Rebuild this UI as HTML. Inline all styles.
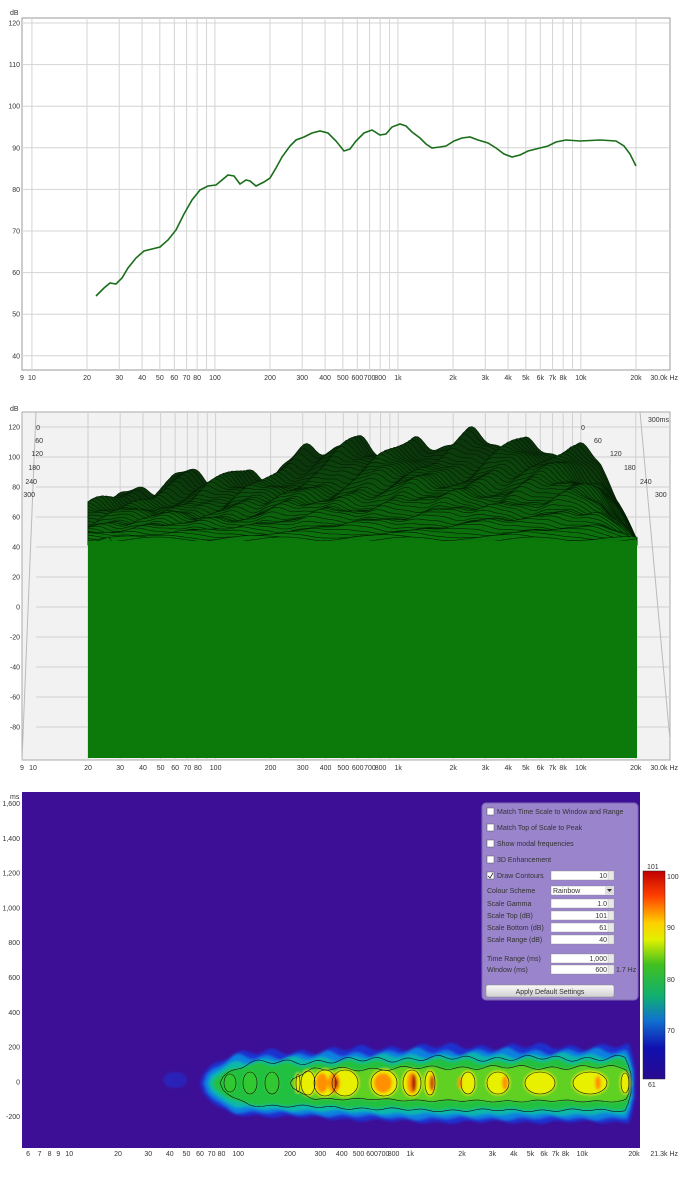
<!DOCTYPE html>
<html><head><meta charset="utf-8"><style>
body{margin:0;width:680px;height:1183px;background:#fff;overflow:hidden;font-family:"Liberation Sans",sans-serif}
svg{position:absolute;left:0;top:0}
text{font-family:"Liberation Sans",sans-serif;font-size:7px;fill:#333}
</style></head><body>
<svg id="s" width="680" height="1183" xmlns="http://www.w3.org/2000/svg">
<defs>
<filter id="bl"><feGaussianBlur stdDeviation="1.3"/></filter>
<linearGradient id="cb" x1="0" y1="0" x2="0" y2="1">
<stop offset="0" stop-color="#c00000"/><stop offset="0.12" stop-color="#ff4000"/><stop offset="0.25" stop-color="#ffd000"/><stop offset="0.33" stop-color="#e0f000"/><stop offset="0.45" stop-color="#40c020"/><stop offset="0.6" stop-color="#10b070"/><stop offset="0.72" stop-color="#1070d0"/><stop offset="0.85" stop-color="#1010b0"/><stop offset="1" stop-color="#2a0a90"/>
</linearGradient>
<linearGradient id="btn" x1="0" y1="0" x2="0" y2="1"><stop offset="0" stop-color="#fafafa"/><stop offset="1" stop-color="#d0d0d0"/></linearGradient>
</defs>
<rect x="22" y="18" width="648" height="352" fill="#fff" stroke="#999"/>
<g id="g1" stroke="#d4d4d4" stroke-width="1"></g>
<text x="10" y="15" font-size="6">dB</text>
<g id="l1"></g>
<polyline fill="none" stroke="#1a6e1a" stroke-width="1.6" points="96,296 104,288 110,283 116,284 122,278 128,268 136,258 144,251 152,249 160,247 168,240 176,230 184,214 192,200 200,190 208,186 216,185 222,180 228,175 234,176 240,184 246,180 250,181 256,186 264,182 270,178 276,168 282,157 290,146 296,140 304,137 312,133 320,131 328,133 336,141 344,151 350,149 356,141 364,133 372,130 380,135 386,134 392,127 400,124 406,126 412,132 420,138 426,144 432,148 440,147 446,146 454,141 462,138 470,137 478,140 488,143 496,148 504,154 512,157 520,155 528,151 536,149 548,146 556,142 566,140 580,141 600,140 616,141 624,146 630,154 636,166"/>
<rect x="22" y="412" width="648" height="348" fill="#f2f2f2" stroke="#aaa"/>
<g id="g2" stroke="#d0d0d0"></g>
<text x="10" y="411" font-size="6">dB</text>
<g id="wf"></g>
<g id="l2"></g>
<rect x="22" y="792" width="618" height="356" fill="#3d0f96"/>
<text x="10" y="799" font-size="6">ms</text>
<g id="l3"></g>
<g filter="url(#bl)" id="sp"></g>
<g id="ct" fill="none" stroke="#111" stroke-width="0.6"></g>
<rect x="482" y="803" width="156" height="197" rx="4" fill="#9a84cc" stroke="#7a68b0"/>
<g id="pn" font-size="6.5"></g>
<rect x="643" y="871" width="22" height="208" fill="url(#cb)" stroke="#222" stroke-width="0.5"/>
<text x="647" y="869" font-size="7">101</text><text x="648" y="1087" font-size="7">61</text>
<text x="667" y="879">100</text><text x="667" y="930">90</text><text x="667" y="982">80</text><text x="667" y="1033">70</text>
</svg>
<script>
const NS="http://www.w3.org/2000/svg";
function el(p,t,a,tx){const e=document.createElementNS(NS,t);for(const k in a)e.setAttribute(k,a[k]);if(tx!==undefined)e.textContent=tx;document.getElementById(p).appendChild(e);return e;}
const fr=[10,20,30,40,50,60,70,80,90,100,200,300,400,500,600,700,800,900,1000,2000,3000,4000,5000,6000,7000,8000,9000,10000,20000];
const lab={10:"10",20:"20",30:"30",40:"40",50:"50",60:"60",70:"70",80:"80",100:"100",200:"200",300:"300",400:"400",500:"500",600:"600",700:"700",800:"800",1000:"1k",2000:"2k",3000:"3k",4000:"4k",5000:"5k",6000:"6k",7000:"7k",8000:"8k",10000:"10k",20000:"20k"};
function X1(f){return 87+183*Math.log10(f/20);}
for(const f of fr){const x=X1(f);el("g1","line",{x1:x,y1:18,x2:x,y2:370});}
for(let d=40;d<=120;d+=10){const y=23+(120-d)*4.16;el("g1","line",{x1:22,y1:y,x2:670,y2:y});el("l1","text",{x:20,y:y+2.5,"text-anchor":"end"},d);}
function xlabels(g,Xf,y,last){el(g,"text",{x:22,y:y,"text-anchor":"middle"},"9");
for(const f in lab){if(f<10)continue;el(g,"text",{x:Xf(+f),y:y,"text-anchor":"middle"},lab[f]);}
el(g,"text",{x:678,y:y,"text-anchor":"end"},last);}
xlabels("l1",X1,380,"30.0k Hz");
function X2(f){return 88+182.6*Math.log10(f/20);}
for(const f of fr){if(f<20)continue;const x=X2(f);el("g2","line",{x1:x,y1:412,x2:x,y2:760});}
for(let d=-80;d<=120;d+=20){const y=607-d*1.5;el("g2","line",{x1:36,y1:y,x2:670,y2:y});el("l2","text",{x:20,y:y+2.5,"text-anchor":"end"},d);}
el("g2","line",{x1:36,y1:412,x2:22,y2:760,stroke:"#bbb"});
el("g2","line",{x1:640,y1:412,x2:670,y2:740,stroke:"#bbb"});
[["0",40,430],["60",43,443],["120",43,456],["180",40,470],["240",37,484],["300",35,497]].forEach(a=>el("l2","text",{x:a[1],y:a[2],"text-anchor":"end"},a[0]));
[["0",581,430],["60",594,443],["120",610,456],["180",624,470],["240",640,484],["300",655,497]].forEach(a=>el("l2","text",{x:a[1],y:a[2]},a[0]));
el("l2","text",{x:648,y:422},"300ms");
xlabels("l2",X2,770,"30.0k Hz");
const env=[[88,40],[150,52],[250,68],[320,88],[400,98],[500,96],[570,96],[600,75],[637,0]];
function H(x){for(let i=0;i<env.length-1;i++){const a=env[i],b=env[i+1];if(x<=b[0]){return a[1]+(b[1]-a[1])*(x-a[0])/(b[0]-a[0]);}}return 0;}
const N=40;
for(let k=0;k<=N;k++){const d=(N-k)/N;const pts=[];
for(let x=88;x<=637;x+=3){const r=8*Math.sin(x*0.11+k*0.35)+6*Math.sin(x*0.043-k*0.2)+3*Math.sin(x*0.23+k);
let h=H(x)+r*(x<590?1:Math.max(0,(637-x)/47));
let y=540-d*h-(1-d)*3*Math.sin(x*0.05+k);
if(k==N)y=540-3*Math.sin(x*0.05)-(x<110?(x-88)/4:0);
pts.push(x+","+y.toFixed(1));}
const g=Math.round(50+70*(1-d));
el("wf","path",{d:"M88,545 L"+pts.join(" L")+" L637,545 Z",fill:"rgb(12,"+g+",12)",stroke:"#041c04","stroke-width":"0.6"});}
el("wf","rect",{x:88,y:541,width:549,height:217,fill:"#0b7a0b"});
const ms=[1600,1400,1200,1000,800,600,400,200,0,-200];
ms.forEach((m,i)=>el("l3","text",{x:20,y:806+i*34.8,"text-anchor":"end"},m.toLocaleString("en-US")));
function X3(f){return 118+172*Math.log10(f/20);}
[[6,"6"],[7,"7"],[8,"8"],[9,"9"],[10,"10"]].forEach(a=>el("l3","text",{x:X3(a[0])+(a[0]==10?3:0),y:1156,"text-anchor":"middle"},a[1]));
for(const f in lab){if(f<20)continue;el("l3","text",{x:X3(+f),y:1156,"text-anchor":"middle"},lab[f]);}
el("l3","text",{x:678,y:1156,"text-anchor":"end"},"21.3k Hz");
function band(top,bot,x0,x1,seed,amp,grow){const up=[],dn=[];for(let x=x0;x<=x1;x+=3){const t=(x-x0)/(x1-x0);const taper=Math.sqrt(Math.max(0,Math.min(1,t*14,(1-t)*60)));
const g=1+grow*Math.min(1,t*2);
const n=amp*(Math.sin(x*0.21+seed)+0.6*Math.sin(x*0.07+seed*2));
up.push(x+","+(1083-(top*g+n)*taper).toFixed(1));dn.unshift(x+","+(1083+(bot*g+n*0.5)*taper).toFixed(1));}
return up.concat(dn).join(" ");}
el("sp","ellipse",{cx:175,cy:1080,rx:12,ry:8,fill:"#2a22b8"});
el("sp","polygon",{points:band(28,30,200,636,1,2.5,0.3),fill:"#1a30d0"});
el("sp","polygon",{points:band(24,27,204,634,2,2.5,0.3),fill:"#1080e0"});
el("sp","polygon",{points:band(21,24,208,633,3,2,0.3),fill:"#10b8a8"});
el("sp","polygon",{points:band(17,20,212,632,4,2,0.3),fill:"#20c040"});
el("sp","polygon",{points:band(13,15,290,631,5,1.5,0.2),fill:"#60d020"});
el("ct","polyline",{points:band(13,15,290,631,5,1.5,0.2)});
el("ct","polyline",{points:band(19,21,220,632,4,2,0.3)});
[[230,7,10,0],[250,8,12,0],[272,8,12,0],[298,3,10,1],[308,8,13,1],[325,12,14,1],[345,14,14,1],[384,14,14,1],[412,10,14,1],[430,6,13,1],[468,8,12,1],[498,12,12,1],[540,16,12,1],[590,18,12,1],[625,5,11,1]].forEach(a=>{el("sp","ellipse",{cx:a[0],cy:1083,rx:a[1],ry:a[2],fill:a[3]?"#e8f000":"#30c830"});el("ct","ellipse",{cx:a[0],cy:1083,rx:a[1]-1,ry:a[2]-1});});
[[322,6,10],[334,6,10],[383,9,10],[412,5,11],[432,3,9],[505,3,7],[598,3,7],[460,2,6]].forEach(a=>el("sp","ellipse",{cx:a[0],cy:1083,rx:a[1],ry:a[2],fill:"#ff9000"}));
[[414,2.5,9],[432,1.5,7],[336,2,5]].forEach(a=>el("sp","ellipse",{cx:a[0],cy:1083,rx:a[1],ry:a[2],fill:"#b01000"}));
const cbs=["Match Time Scale to Window and Range","Match Top of Scale to Peak","Show modal frequencies","3D Enhancement"];
cbs.forEach((t,i)=>{const y=814+i*16;el("pn","rect",{x:487,y:y-6,width:7,height:7,fill:"#fff",stroke:"#555","stroke-width":"0.5"});el("pn","text",{x:497,y:y,"font-size":"6.5",fill:"#222"},t);});
el("pn","rect",{x:487,y:872,width:7,height:7,fill:"#fff",stroke:"#555","stroke-width":"0.5"});
el("pn","path",{d:"M488,876 l2,2 l3,-5",stroke:"#222",fill:"none","stroke-width":"0.8"});
el("pn","text",{x:497,y:878,"font-size":"6.5"},"Draw Contours");
const rows=[["",878,"10"],["Colour Scheme",893,"Rainbow"],["Scale Gamma",906,"1.0"],["Scale Top (dB)",918,"101"],["Scale Bottom (dB)",930,"61"],["Scale Range (dB)",942,"40"],["Time Range (ms)",961,"1,000"],["Window (ms)",972,"600"]];
rows.forEach(r=>{const y=r[1];if(r[0])el("pn","text",{x:487,y:y,"font-size":"6.5"},r[0]);
el("pn","rect",{x:551,y:y-7,width:63,height:9,fill:"#fff",stroke:"#888","stroke-width":"0.4"});
if(r[2]=="Rainbow"){el("pn","text",{x:553,y:y,"font-size":"6.5"},"Rainbow");el("pn","rect",{x:605,y:y-7,width:9,height:9,fill:"#ddd"});el("pn","path",{d:"M607,"+(y-4)+" h5 l-2.5,3z",fill:"#333"});}
else{el("pn","text",{x:607,y:y,"font-size":"6.5","text-anchor":"end"},r[2]);el("pn","rect",{x:608,y:y-7,width:6,height:9,fill:"#e8e8e8",stroke:"#999","stroke-width":"0.3"});}});
el("pn","text",{x:616,y:972,"font-size":"6.5"},"1.7 Hz");
el("pn","rect",{x:486,y:985,width:128,height:12,rx:2,fill:"url(#btn)",stroke:"#888","stroke-width":"0.5"});
el("pn","text",{x:550,y:994,"font-size":"7","text-anchor":"middle",fill:"#111"},"Apply Default Settings");
</script>
</body></html>
